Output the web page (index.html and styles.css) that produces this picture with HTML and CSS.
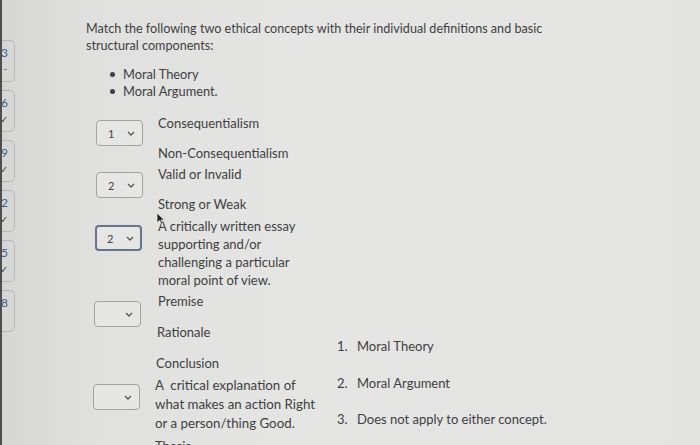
FILE: index.html
```html
<!DOCTYPE html>
<html>
<head>
<meta charset="utf-8">
<link rel="stylesheet" href="styles.css">
</head>
<body>
<aside class="rail">
  <div class="card"><span class="num">3</span><span class="mark dash">--</span></div>
  <div class="card"><span class="num">6</span><span class="mark">✓</span></div>
  <div class="card"><span class="num">9</span><span class="mark">✓</span></div>
  <div class="card"><span class="num">2</span><span class="mark">✓</span></div>
  <div class="card"><span class="num">5</span><span class="mark">✓</span></div>
  <div class="card"><span class="num">8</span><span class="mark"></span></div>
</aside>
<main class="main">
  <p class="prompt">Match the following two ethical concepts with their individual definitions and basic structural components:</p>
  <ul class="bullets">
    <li>Moral Theory</li>
    <li>Moral Argument.</li>
  </ul>
  <section class="match">
    <div class="selects">
      <div class="sel s1"><span class="val">1</span><svg class="chev" width="8" height="5" viewBox="0 0 8 5"><polyline points="1,1 4,4 7,1" fill="none" stroke="#555" stroke-width="1.3"/></svg></div>
      <div class="sel s2"><span class="val">2</span><svg class="chev" width="8" height="5" viewBox="0 0 8 5"><polyline points="1,1 4,4 7,1" fill="none" stroke="#555" stroke-width="1.3"/></svg></div>
      <div class="sel s3 focus"><span class="val">2</span><svg class="chev" width="8" height="5" viewBox="0 0 8 5"><polyline points="1,1 4,4 7,1" fill="none" stroke="#555" stroke-width="1.3"/></svg></div>
      <div class="sel s4"><span class="val"></span><svg class="chev" width="8" height="5" viewBox="0 0 8 5"><polyline points="1,1 4,4 7,1" fill="none" stroke="#555" stroke-width="1.3"/></svg></div>
      <div class="sel s5"><span class="val"></span><svg class="chev" width="8" height="5" viewBox="0 0 8 5"><polyline points="1,1 4,4 7,1" fill="none" stroke="#555" stroke-width="1.3"/></svg></div>
    </div>
    <div class="items">
      <p class="it i1">Consequentialism</p>
      <p class="it i2">Non-Consequentialism</p>
      <p class="it i3">Valid or Invalid</p>
      <p class="it i4">Strong or Weak</p>
      <p class="it i5">A critically written essay supporting and/or challenging a particular moral point of view.<svg class="cursor" width="9" height="13" viewBox="0 0 9 13"><path d="M1 1 L1 11 L3.5 8.5 L5.5 12.5 L7 11.8 L5 8 L8.5 8 Z" fill="#222" stroke="#eee" stroke-width="0.8"/></svg></p>
      <p class="it i6">Premise</p>
      <p class="it i7">Rationale</p>
      <p class="it i8">Conclusion</p>
      <p class="it i9">A &nbsp;critical explanation of what makes an action Right or a person/thing Good.</p>
      <p class="it i10">Thesis</p>
    </div>
    <ol class="answers">
      <li><span class="n">1.</span>Moral Theory</li>
      <li><span class="n">2.</span>Moral Argument</li>
      <li><span class="n">3.</span>Does not apply to either concept.</li>
    </ol>
  </section>
</main>
</body>
</html>
```
FILE: styles.css
```css
html, body {
  margin: 0;
  padding: 0;
  height: 445px;
  overflow: hidden;
}
body {
  display: flex;
  font-family: Lato, "Open Sans", sans-serif;
  font-size: 13px;
  color: #3e3f42;
  background: linear-gradient(90deg, #d6d6d4 0px, #e0e0de 90px, #e5e5e3 300px, #e4e4e2 700px);
}
.rail {
  width: 15px;
  flex: none;
  border-left: 2px solid #4f4f4f;
  overflow: hidden;
  display: flex;
  flex-direction: column;
  align-items: flex-end;
  gap: 8px;
  padding-top: 40px;
  height: 445px;
  box-sizing: border-box;
}
.card {
  width: 40px;
  height: 42px;
  flex: none;
  box-sizing: border-box;
  border: 1px solid #b6b6b4;
  border-radius: 5px;
  display: flex;
  flex-direction: column;
  align-items: flex-end;
  padding: 4px 6px 0 0;
  line-height: 16px;
}
.num {
  color: #3f5d8f;
  font-size: 12px;
}
.mark {
  color: #444;
  font-size: 10px;
  line-height: 16px;
}
.mark.dash {
  letter-spacing: 1px;
  font-size: 9px;
}
.main {
  flex: 1;
  padding: 20px 0 0 71px;
}
.prompt {
  margin: 0;
  width: 480px;
  line-height: 17px;
  font-size: 12.6px;
}
.bullets {
  list-style: none;
  margin: 12px 0 0 0;
  padding: 0;
  line-height: 17px;
  font-size: 12.8px;
}
.bullets li::before {
  content: "";
  display: inline-block;
  width: 5px;
  height: 5px;
  border-radius: 50%;
  background: #3e3f42;
  margin: 0 8px 2px 24px;
  vertical-align: middle;
}
.match {
  display: grid;
  grid-template-columns: 72px 179px auto;
  margin-top: 14px;
}
.selects {
  display: flex;
  flex-direction: column;
  padding-left: 10px;
}
.sel {
  width: 47px;
  height: 26px;
  box-sizing: border-box;
  border: 1px solid #a3a3a1;
  border-radius: 4px;
  background: #e6e6e4;
  display: flex;
  align-items: center;
  font-size: 11px;
  color: #444;
}
.sel .val {
  width: 30px;
  padding-left: 11px;
  box-sizing: border-box;
}
.sel.focus {
  border: 2px solid #66758b;
}
.sel.focus .val { padding-left: 10px; width: 29px; }
.s1 { margin-top: 6px; }
.s2 { margin-top: 26px; }
.s3 { margin-top: 27px; margin-left: -1px; }
.s4 { margin-top: 50px; margin-left: -2px; }
.s5 { margin-top: 57px; margin-left: -3px; }
.items {
  display: flex;
  flex-direction: column;
}
.it {
  margin: 0;
  line-height: 18px;
}
.i2 { margin-top: 12px; }
.i3 { margin-top: 3px; }
.i4 { margin-top: 12px; }
.i5 { margin-top: 4px; position: relative; width: 150px; }
.i6 { margin-top: 3px; }
.i7 { margin-top: 13px; margin-left: -1px; }
.i8 { margin-top: 13px; margin-left: -2px; }
.i9 { margin-top: 4px; margin-left: -3px; line-height: 19px; font-size: 13.3px; width: 165px; }
.i10 { margin-top: 4px; margin-left: -3px; }
.cursor {
  position: absolute;
  left: -2px;
  top: -5px;
}
.answers {
  list-style: none;
  margin: 0;
  padding: 223px 0 0 0;
  line-height: 18px;
}
.answers li + li {
  margin-top: 18.5px;
}
.answers .n {
  display: inline-block;
  width: 20px;
}
```
